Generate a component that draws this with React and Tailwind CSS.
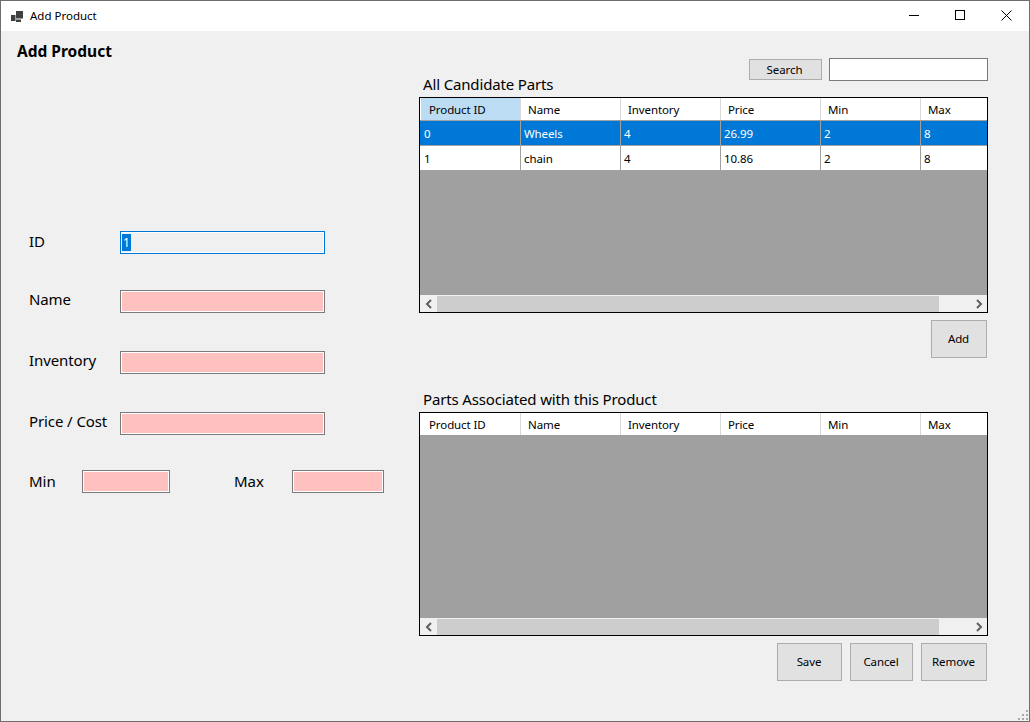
import React from "react";

const font = { fontFamily: '"Noto Sans", "Open Sans", sans-serif' };
const columns = ["Product ID", "Name", "Inventory", "Price", "Min", "Max"];
const candidateParts = [
  ["0", "Wheels", "4", "26.99", "2", "8"],
  ["1", "chain", "4", "10.86", "2", "8"],
];

const PinkInput = ({ className }) => (
  <div className={`h-[23px] border border-[#7a7a7a] bg-[#ffc0c0] shadow-[inset_0_0_0_1px_#ffffff] ${className}`} />
);

const Field = ({ label, className }) => (
  <div className={`flex items-center ${className}`}>
    <span className="-mt-[5px] w-[91px] text-[15px] leading-5 tracking-[-0.1px] text-black">{label}</span>
    <PinkInput className="w-[205px]" />
  </div>
);

const Button = ({ children, className }) => (
  <button className={`h-[38px] border border-[#adadad] bg-[#e1e1e1] pr-px text-[11.5px] tracking-[-0.1px] text-black ${className}`}>
    {children}
  </button>
);

const ScrollBar = () => (
  <div className="flex h-[17px] items-center border-t border-[#f0f0f0] bg-[#f0f0f0]">
    <div className="flex w-[17px] justify-center">
      <svg width="8" height="10" viewBox="0 0 8 10">
        <path d="M6 1 2 5l4 4" fill="none" stroke="#606060" strokeWidth="2" />
      </svg>
    </div>
    <div className="h-full w-[502px] bg-[#cdcdcd]" />
    <div className="flex-1" />
    <div className="flex w-[17px] justify-center">
      <svg width="8" height="10" viewBox="0 0 8 10">
        <path d="M2 1l4 4-4 4" fill="none" stroke="#606060" strokeWidth="2" />
      </svg>
    </div>
  </div>
);

const DataGrid = ({ rows, bodyHeight, selectedHeader }) => (
  <div className="h-full border border-black bg-[#a0a0a0]">
    <div className="flex h-[23px] overflow-hidden border-b border-[#a0a0a0] bg-white pl-px">
      {columns.map((col, i) => (
        <div
          key={col}
          className={`h-full w-[100px] shrink-0 border-r border-[#d8d8d8] text-[11.5px] leading-[23px] tracking-[-0.1px] text-black ${
            i === 0 ? "pl-2" : "pl-[7px]"
          } ${i === 0 && selectedHeader ? "bg-[#bcdcf4]" : "bg-white"}`}
        >
          {col}
        </div>
      ))}
    </div>
    <div className={bodyHeight}>
      {rows.map((row, r) => (
        <div
          key={row[0]}
          className={`flex h-[25px] overflow-hidden border-b border-[#a0a0a0] pl-px ${
            r === 0 ? "bg-[#0078d7] text-white" : "bg-white text-black"
          }`}
        >
          {row.map((cell, i) => (
            <div
              key={i}
              className="w-[100px] shrink-0 border-r border-[#a0a0a0] pl-[3px] text-[11.5px] leading-[25px] tracking-[-0.1px]"
            >
              {cell}
            </div>
          ))}
        </div>
      ))}
    </div>
    <ScrollBar />
  </div>
);

export default function App() {
  return (
    <div style={font} className="relative flex h-[722px] w-[1030px] flex-col border border-[#6e6e6e] bg-[#f0f0f0]">
      {/* title bar */}
      <div className="flex h-[30px] shrink-0 items-center bg-white pl-[10px] text-[11.5px] text-black">
        <svg width="12" height="11" viewBox="0 0 12 11" className="mr-[7px]">
          <path d="M0 4h4.5v6H0zM5 0h7v7.5H5zM5 8.5h5V11H5z" fill="#404040" />
        </svg>
        <span>Add Product</span>
        <div className="mb-[2px] ml-auto flex items-center gap-[35px] pr-[17px]">
          <svg width="11" height="11" viewBox="0 0 11 11">
            <path d="M0 5.5h10" stroke="#000" />
          </svg>
          <svg width="11" height="11" viewBox="0 0 11 11">
            <rect x="0.5" y="0.5" width="9" height="9" fill="none" stroke="#000" />
          </svg>
          <svg width="11" height="11" viewBox="0 0 11 11">
            <path d="M0.5 0.5l10 10M10.5 0.5l-10 10" stroke="#000" fill="none" />
          </svg>
        </div>
      </div>

      <div className="flex flex-1">
        {/* left column */}
        <div className="w-[418px] shrink-0">
          <h1 className="pl-4 pt-[10px] text-[15.5px] font-bold leading-5 text-black">Add Product</h1>
          <div className="pl-7 pt-[170px]">
            <div className="flex items-center">
              <span className="-mt-[3px] w-[91px] text-[15px] leading-5 text-black">ID</span>
              <div className="flex h-[23px] w-[205px] items-center border border-[#0078d7] bg-[#f0f0f0] pl-[1px] shadow-[inset_0_0_0_1px_#ffffff]">
                <span className="bg-[#0078d7] px-px text-[12px] leading-[17px] text-white">1</span>
              </div>
            </div>
            <Field label="Name" className="mt-[36px]" />
            <Field label="Inventory" className="mt-[38px]" />
            <Field label="Price / Cost" className="mt-[38px]" />
            <div className="mt-[35px] flex items-center">
              <span className="-mt-[2px] w-[53px] text-[15px] leading-5 text-black">Min</span>
              <PinkInput className="w-[88px]" />
              <span className="-mt-[2px] ml-[64px] w-[58px] text-[15px] leading-5 text-black">Max</span>
              <PinkInput className="w-[92px]" />
            </div>
          </div>
        </div>

        {/* right column */}
        <div className="w-[569px] shrink-0">
          <div className="flex items-start pt-[27px]">
            <button className="ml-[330px] mt-px h-[21px] w-[73px] border border-[#adadad] bg-[#e1e1e1] pr-[2px] text-[11.5px] tracking-[-0.1px] text-black">
              Search
            </button>
            <div className="ml-[7px] h-[23px] w-[159px] border border-[#7a7a7a] bg-white" />
          </div>
          <div className="-mt-[7px] pl-1 text-[15px] leading-5 tracking-[-0.15px] text-black">All Candidate Parts</div>
          <div className="mt-[3px] h-[216px]">
            <DataGrid rows={candidateParts} bodyHeight="h-[174px]" selectedHeader />
          </div>
          <div className="mt-[7px] flex justify-end pr-px">
            <Button className="w-[56px]">Add</Button>
          </div>
          <div className="mt-[31px] pl-1 text-[15px] leading-5 tracking-[-0.15px] text-black">
            Parts Associated with this Product
          </div>
          <div className="mt-[3px] h-[224px]">
            <DataGrid rows={[]} bodyHeight="h-[182px]" />
          </div>
          <div className="mt-[7px] flex justify-end gap-2 pr-px">
            <Button className="w-[65px]">Save</Button>
            <Button className="w-[63px]">Cancel</Button>
            <Button className="w-[66px]">Remove</Button>
          </div>
        </div>
      </div>

      {/* resize grip */}
      <svg width="12" height="12" viewBox="0 0 12 12" className="absolute bottom-0 right-0">
        <path d="M9 1h2v2H9zM5 5h2v2H5zM9 5h2v2H9zM1 9h2v2H1zM5 9h2v2H5zM9 9h2v2H9z" fill="#a8a8a8" />
      </svg>
    </div>
  );
}
